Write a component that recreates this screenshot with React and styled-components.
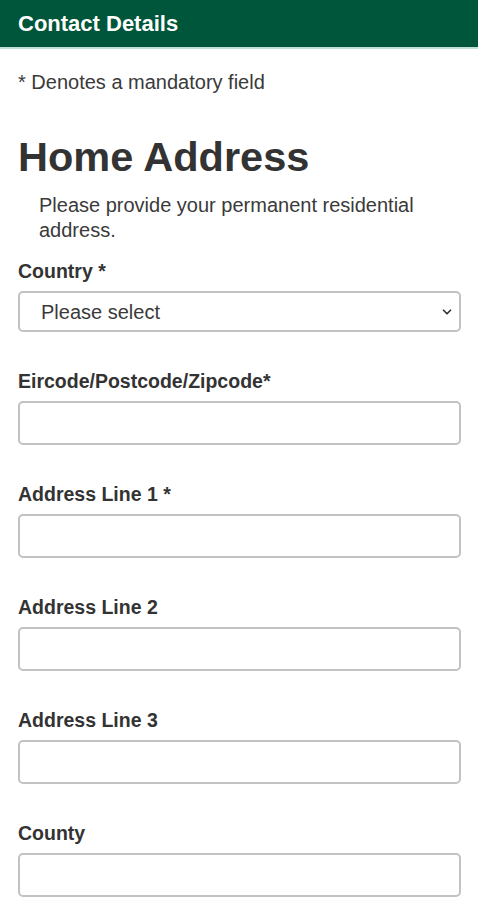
import React from "react";
import styled, { createGlobalStyle } from "styled-components";
import { ChevronDown } from "lucide-react";

const GlobalStyle = createGlobalStyle`
  body {
    margin: 0;
    background: #ffffff;
    font-family: "Liberation Sans", Arial, sans-serif;
    color: #333333;
  }
`;

const TopBar = styled.header`
  height: 47px;
  padding-left: 18px;
  background-color: #00563a;
  border-bottom: 2px solid #bfe0d3;
  display: flex;
  align-items: center;
`;

const TopTitle = styled.h1`
  margin: 0;
  font-size: 22px;
  font-weight: 700;
  color: #ffffff;
`;

const Content = styled.main`
  padding: 0 17px 40px 18px;
`;

const Note = styled.p`
  margin: 22px 0 0;
  font-size: 20px;
  line-height: 22px;
  color: #3a3a3a;
`;

const Heading = styled.h2`
  margin: 40px 0 0;
  font-size: 41.5px;
  line-height: 48px;
  font-weight: 700;
  color: #333333;
`;

const Intro = styled.p`
  margin: 12px 0 0;
  padding-left: 21px;
  font-size: 20px;
  line-height: 25px;
  color: #3a3a3a;
`;

const Field = styled.div`
  display: flex;
  flex-direction: column;
  margin-top: ${(p) => (p.$first ? "17px" : "38px")};
`;

const Label = styled.label`
  font-size: 19.5px;
  line-height: 22px;
  font-weight: 700;
  color: #333333;
  margin-bottom: 9px;
`;

const TextInput = styled.input`
  box-sizing: border-box;
  width: 100%;
  height: 44px;
  border: 2px solid #c2c2c2;
  border-radius: 5px;
  background: #ffffff;
  font: inherit;
  font-size: 20px;
  padding: 0 12px;
  outline: none;
`;

const SelectWrap = styled.div`
  position: relative;
`;

const Select = styled.select`
  box-sizing: border-box;
  width: 100%;
  height: 41px;
  border: 2px solid #c2c2c2;
  border-radius: 5px;
  background: #ffffff;
  appearance: none;
  font-family: "Liberation Sans", Arial, sans-serif;
  font-size: 20px;
  color: #3a3a3a;
  padding: 0 40px 0 21px;
  outline: none;
`;

const Chevron = styled(ChevronDown)`
  position: absolute;
  right: 7px;
  top: 14px;
  color: #333333;
  pointer-events: none;
`;

const fields = [
  "Eircode/Postcode/Zipcode*",
  "Address Line 1 *",
  "Address Line 2",
  "Address Line 3",
  "County",
];

export default function App() {
  return (
    <>
      <GlobalStyle />
      <TopBar>
        <TopTitle>Contact Details</TopTitle>
      </TopBar>
      <Content>
        <Note>* Denotes a mandatory field</Note>
        <Heading>Home Address</Heading>
        <Intro>Please provide your permanent residential address.</Intro>
        <Field $first>
          <Label>Country *</Label>
          <SelectWrap>
            <Select defaultValue="">
              <option value="">Please select</option>
            </Select>
            <Chevron size={14} strokeWidth={3} />
          </SelectWrap>
        </Field>
        {fields.map((f) => (
          <Field key={f}>
            <Label>{f}</Label>
            <TextInput type="text" />
          </Field>
        ))}
      </Content>
    </>
  );
}
